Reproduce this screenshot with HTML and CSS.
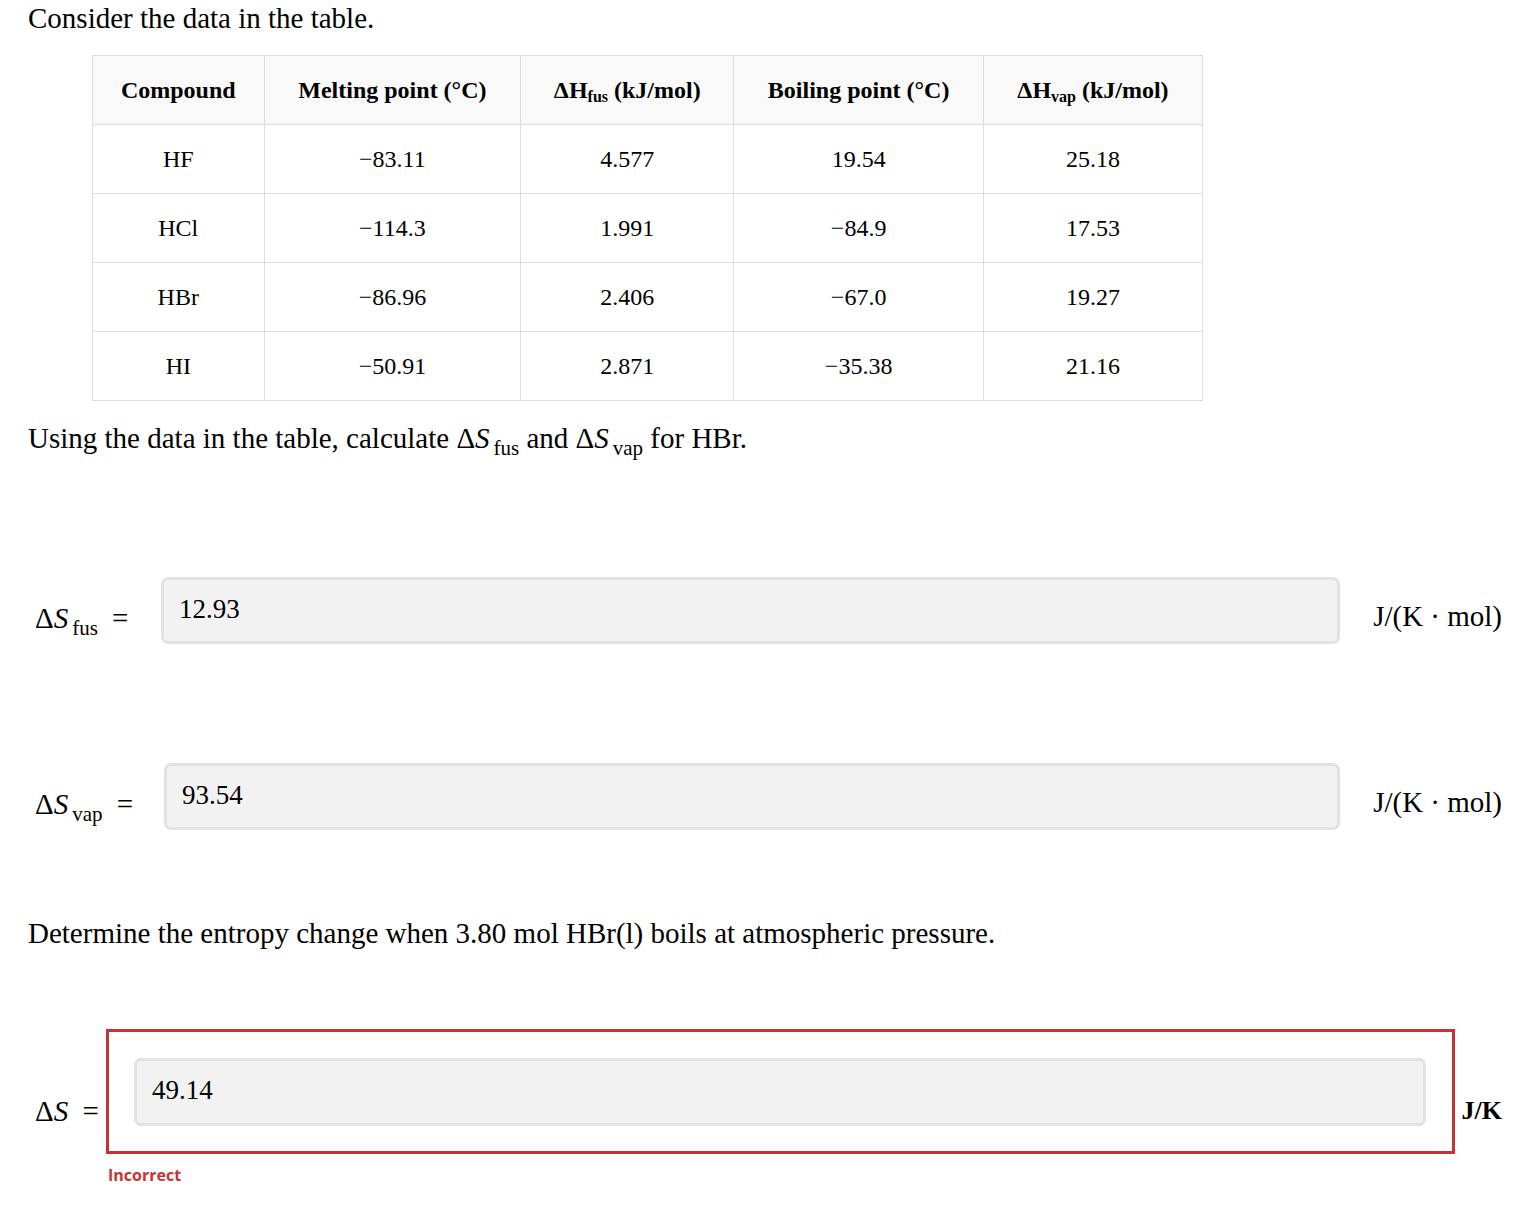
FILE: index.html
```html
<!DOCTYPE html>
<html>
<head>
<meta charset="utf-8">
<link rel="stylesheet" href="styles.css">
</head>
<body>
<div class="page">
  <p class="title">Consider the data in the table.</p>
  <table class="data">
    <thead>
      <tr>
        <th class="c1">Compound</th>
        <th class="c2">Melting point (°C)</th>
        <th class="c3">ΔH<sub class="hs">fus</sub> (kJ/mol)</th>
        <th class="c4">Boiling point (°C)</th>
        <th class="c5">ΔH<sub class="hs">vap</sub> (kJ/mol)</th>
      </tr>
    </thead>
    <tbody>
      <tr><td>HF</td><td>−83.11</td><td>4.577</td><td>19.54</td><td>25.18</td></tr>
      <tr><td>HCl</td><td>−114.3</td><td>1.991</td><td>−84.9</td><td>17.53</td></tr>
      <tr><td>HBr</td><td>−86.96</td><td>2.406</td><td>−67.0</td><td>19.27</td></tr>
      <tr><td>HI</td><td>−50.91</td><td>2.871</td><td>−35.38</td><td>21.16</td></tr>
    </tbody>
  </table>
  <p class="prompt">Using the data in the table, calculate Δ<i>S</i><sub class="ms">fus</sub> and Δ<i>S</i><sub class="ms">vap</sub> for HBr.</p>

  <div class="answer row-fus">
    <div class="label l1">Δ<i>S</i><sub class="ms">fus</sub> <span class="eq">=</span></div>
    <div class="input">12.93</div>
    <div class="unit u1">J/(K · mol)</div>
  </div>

  <div class="answer row-vap">
    <div class="label l2">Δ<i>S</i><sub class="ms">vap</sub> <span class="eq">=</span></div>
    <div class="input">93.54</div>
    <div class="unit u1">J/(K · mol)</div>
  </div>

  <p class="prompt2">Determine the entropy change when 3.80 mol HBr(l) boils at atmospheric pressure.</p>

  <div class="answer row-s">
    <div class="label l3 low">Δ<i>S</i> <span class="eq">=</span></div>
    <div class="wrong">
      <div class="input">49.14</div>
    </div>
    <div class="unit u3 low">J/K</div>
  </div>
  <div class="feedback">Incorrect</div>
</div>
</body>
</html>
```

FILE: styles.css
```css
html, body {
  margin: 0;
  padding: 0;
  background: #ffffff;
}
body {
  font-family: "Liberation Serif", "Times New Roman", serif;
  color: #000000;
}
.page {
  padding: 1px 16px 0 28px;
}
.title {
  margin: 0;
  font-size: 29px;
  line-height: 34px;
}
.data {
  margin: 20px 0 0 64px;
  border-collapse: collapse;
  width: 1111px;
  font-size: 24px;
}
.data th, .data td {
  border: 1px solid #dddddd;
  height: 68px;
  padding: 0;
  text-align: center;
  vertical-align: middle;
}
.data th {
  background: #f9f9f9;
  font-weight: bold;
}
.data .c1 { width: 171px; }
.data .c2 { width: 257px; }
.data .c3 { width: 213px; }
.data .c4 { width: 250px; }
.data .c5 { width: 219px; }
.hs {
  font-size: 16px;
  vertical-align: -4px;
  line-height: 0;
}
.ms {
  font-size: 21px;
  vertical-align: -7px;
  line-height: 0;
  margin-left: 4px;
}
.prompt {
  margin: 20px 0 0 0;
  font-size: 29px;
  line-height: 34px;
}
.answer {
  display: flex;
  align-items: center;
}
.row-fus { margin-top: 122px; }
.row-vap { margin-top: 119px; }
.label {
  font-size: 29px;
  line-height: 34px;
  margin-left: 7px;
  margin-top: 14px;
  white-space: nowrap;
}
.label .eq { margin-left: 7px; }
.l1 { width: 126px; }
.l2 { width: 129px; }
.l3 { width: 71px; }
.input {
  flex: 1;
  box-sizing: border-box;
  height: 67px;
  background: #f2f2f2;
  border: 3px solid #e2e2e2;
  border-radius: 7px;
  font-size: 27px;
  line-height: 34px;
  padding: 12px 0 0 15px;
}
.unit {
  font-size: 29px;
  line-height: 34px;
  margin-top: 10px;
  text-align: right;
  white-space: nowrap;
}
.u1 { width: 162px; }
.u3 { width: 47px; font-weight: bold; font-size: 26px; }
.label.low, .unit.low { margin-top: 38px; }
.prompt2 {
  margin: 86px 0 0 0;
  font-size: 29px;
  line-height: 34px;
}
.row-s { margin-top: 79px; }
.wrong {
  flex: 1;
  display: flex;
  box-sizing: border-box;
  height: 125px;
  border: 3px solid #c83232;
  padding: 26px 26px 25px 25px;
}
.wrong .input {
  height: 68px;
}
.feedback {
  margin: 10px 0 0 80px;
  font-family: "Open Sans", "Noto Sans", sans-serif;
  font-weight: bold;
  font-size: 16px;
  color: #c83232;
}
```
